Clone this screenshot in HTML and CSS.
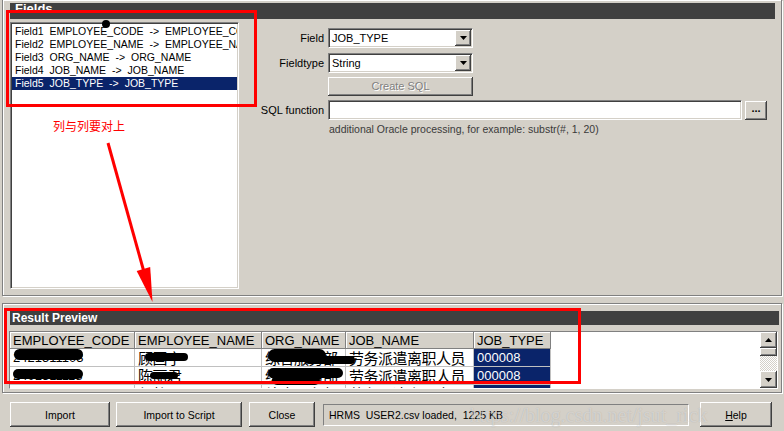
FILE: index.html
```html
<!DOCTYPE html>
<html>
<head>
    <title>CSV Import</title>
    <link rel="stylesheet" href="styles.css">
</head>
<body>
    <div class="panel fields-panel">
        <div class="caption"><span>Fields</span></div>
        <div class="fields-body">
            <div class="listbox">
                <div class="item">Field1 EMPLOYEE_CODE -&gt; EMPLOYEE_CODE</div>
                <div class="item">Field2 EMPLOYEE_NAME -&gt; EMPLOYEE_NAME</div>
                <div class="item">Field3 ORG_NAME -&gt; ORG_NAME</div>
                <div class="item">Field4 JOB_NAME -&gt; JOB_NAME</div>
                <div class="item selected">Field5 JOB_TYPE -&gt; JOB_TYPE</div>
            </div>
            <div class="form">
                <div class="row row-field">
                    <label>Field</label>
                    <div class="combo">
                        <span class="value">JOB_TYPE</span>
                        <span class="drop"><svg width="7" height="4" viewBox="0 0 7 4"><path d="M0 0h7L3.5 4z"/></svg></span>
                    </div>
                </div>
                <div class="row row-type">
                    <label>Fieldtype</label>
                    <div class="combo">
                        <span class="value">String</span>
                        <span class="drop"><svg width="7" height="4" viewBox="0 0 7 4"><path d="M0 0h7L3.5 4z"/></svg></span>
                    </div>
                </div>
                <div class="row row-create">
                    <label></label>
                    <div class="btn-disabled">Create SQL</div>
                </div>
                <div class="row row-sql">
                    <label>SQL function</label>
                    <div class="sql-input"></div>
                    <div class="dots">...</div>
                </div>
                <div class="hint">additional Oracle processing, for example: substr(#, 1, 20)</div>
            </div>
        </div>
    </div>

    <div class="panel preview-panel">
        <div class="caption"><span>Result Preview</span></div>
        <div class="grid">
            <div class="table-area">
                <table>
                    <colgroup>
                        <col class="c1"><col class="c2"><col class="c3"><col class="c4"><col class="c5">
                    </colgroup>
                    <tr>
                        <th>EMPLOYEE_CODE</th><th>EMPLOYEE_NAME</th><th>ORG_NAME</th><th>JOB_NAME</th><th>JOB_TYPE</th>
                    </tr>
                    <tr>
                        <td>2421511103</td><td class="cjk">顾国宇</td><td class="cjk">综合服务部</td><td class="cjk">劳务派遣离职人员</td><td class="sel">000008</td>
                    </tr>
                    <tr>
                        <td>2401311118</td><td class="cjk">陈丽君</td><td class="cjk">综合服务部</td><td class="cjk">劳务派遣离职人员</td><td class="sel">000008</td>
                    </tr>
                    <tr>
                        <td>2401311120</td><td class="cjk">何静</td><td class="cjk">综合服务部</td><td class="cjk">劳务派遣离职人员</td><td class="sel">000008</td>
                    </tr>
                </table>
                <!-- redactions -->
                <span class="blob b1"></span>
                <span class="blob b2"></span>
                <span class="blob b3"></span>
                <span class="blob b4"></span>
                <span class="blob b5"></span>
                <span class="blob b6"></span>
                <span class="blob b7"></span>
                <span class="blob b8"></span>
            </div>
            <div class="vscroll">
                <div class="sb-btn sb-up"><svg width="7" height="4" viewBox="0 0 7 4"><path d="M0 4h7L3.5 0z"/></svg></div>
                <div class="sb-thumb"></div>
                <div class="sb-track"></div>
                <div class="sb-btn sb-down"><svg width="7" height="4" viewBox="0 0 7 4"><path d="M0 0h7L3.5 4z"/></svg></div>
            </div>
        </div>
    </div>

    <div class="buttons">
        <div class="btn b-import">Import</div>
        <div class="btn b-script">Import to Script</div>
        <div class="btn b-close">Close</div>
        <div class="status">HRMS&nbsp; USER2.csv loaded,&nbsp; 1225 KB</div>
        <div class="btn b-help"><u>H</u>elp</div>
    </div>

    <!-- annotations drawn over the screenshot -->
    <div class="mark mark-fields"></div>
    <div class="mark mark-preview"></div>
    <div class="dot"></div>
    <div class="note">列与列要对上</div>
    <svg class="arrow" width="784" height="431" viewBox="0 0 784 431">
        <line x1="108" y1="143" x2="144" y2="272" stroke="#f00" stroke-width="3"/>
        <polygon points="136.7,271 150.2,267 152.5,302" fill="#f00"/>
    </svg>
    <div class="watermark">https://blog.csdn.net/jsut_rick</div>
</body>
</html>
```

FILE: styles.css
```css
* {
    box-sizing: border-box;
}

body {
    position: relative;
    width: 784px;
    height: 431px;
    margin: 0;
    overflow: hidden;
    background: #d4d0c8;
    font-family: "Liberation Sans", Arial, sans-serif;
    font-size: 11px;
    color: #000;
}

/* etched group frames */
.panel {
    margin-left: 2px;
    width: 780px;
    border: 1px solid #808080;
    box-shadow: inset 1px 1px #fff, 1px 1px #fff;
}

.fields-panel {
    height: 296px;
    border-top: none;
    padding: 3px 6px 0 7px;
}

.preview-panel {
    height: 90px;
    margin-top: 7px;
    padding: 7px 2px 3px 7px;
}

.caption {
    height: 16px;
    padding-left: 5px;
    overflow: hidden;
    background: #404040;
    color: #fff;
    font-size: 12px;
    font-weight: bold;
    line-height: 16px;
}

.fields-panel .caption span {
    display: block;
    margin-top: -2px;
    font-size: 13px;
}

.preview-panel .caption {
    height: 14px;
    padding-left: 2px;
    line-height: 14px;
}

.fields-body {
    display: flex;
    margin-top: 3px;
}

.listbox {
    width: 229px;
    height: 267px;
    padding: 2px 1px;
    background: #fff;
    border: 1px solid;
    border-color: #808080 #fff #fff #808080;
    box-shadow: inset 1px 1px #404040, inset -1px -1px #d4d0c8;
    font-size: 10.5px;
}

.item {
    height: 13px;
    padding-left: 3px;
    line-height: 13px;
    white-space: nowrap;
    overflow: hidden;
    word-spacing: 3px;
}

.item.selected {
    background: #0a246a;
    color: #fff;
}

.form {
    flex: 1;
    padding-top: 6px;
}

.row {
    display: flex;
    align-items: center;
}

.row label {
    width: 85px;
    margin-right: 4px;
    text-align: right;
}

.row-field { margin-bottom: 5px; }
.row-type { margin-bottom: 4px; }
.row-create { margin-bottom: 4px; }

.combo {
    display: flex;
    align-items: center;
    width: 145px;
    height: 20px;
    padding: 1px;
    background: #fff;
    border: 1px solid;
    border-color: #808080 #fff #fff #808080;
    box-shadow: inset 1px 1px #404040, inset -1px -1px #d4d0c8;
}

.combo .value {
    flex: 1;
    padding-left: 2px;
}

.drop,
.sb-btn {
    display: flex;
    align-items: center;
    justify-content: center;
    width: 16px;
    height: 16px;
    background: #d4d0c8;
    box-shadow: inset -1px -1px #404040, inset 1px 1px #fff, inset -2px -2px #808080;
}

.btn-disabled {
    width: 145px;
    height: 19px;
    line-height: 19px;
    text-align: center;
    background: #d4d0c8;
    box-shadow: inset -1px -1px #404040, inset 1px 1px #fff, inset -2px -2px #808080;
    color: #808080;
    text-shadow: 1px 1px #fff;
}

.sql-input {
    width: 414px;
    height: 20px;
    background: #fff;
    border: 1px solid;
    border-color: #808080 #fff #fff #808080;
    box-shadow: inset 1px 1px #404040, inset -1px -1px #d4d0c8;
}

.dots {
    width: 22px;
    height: 19px;
    margin-left: 3px;
    line-height: 14px;
    text-align: center;
    font-weight: bold;
    background: #d4d0c8;
    box-shadow: inset -1px -1px #404040, inset 1px 1px #fff, inset -2px -2px #808080;
}

.hint {
    margin-top: 3px;
    padding-left: 90px;
    font-size: 10.5px;
    color: #3a3a3a;
}

/* result grid */
.grid {
    display: flex;
    height: 58px;
    margin: 6px 1px 0 -1px;
    background: #fff;
    border: 1px solid;
    border-color: #808080 #fff #fff #808080;
}

.table-area {
    position: relative;
    flex: 1;
    overflow: hidden;
}

table {
    width: 541px;
    table-layout: fixed;
    border-collapse: separate;
    border-spacing: 0;
    font-size: 13px;
}

.c1 { width: 125px; }
.c2 { width: 127px; }
.c3 { width: 84px; }
.c4 { width: 128px; }
.c5 { width: 77px; }

th {
    height: 17px;
    padding: 0 3px;
    background: #d4d0c8;
    font-weight: normal;
    text-align: left;
    white-space: nowrap;
    overflow: hidden;
    box-shadow: inset -1px -1px #808080, inset 1px 1px #fff;
}

td {
    height: 18px;
    padding: 0 3px;
    line-height: 16px;
    border-right: 1px solid #c0c0c0;
    border-bottom: 1px solid #c0c0c0;
    white-space: nowrap;
    overflow: hidden;
}

td.cjk {
    font-family: "Noto Sans CJK SC", sans-serif;
    font-size: 15px;
    letter-spacing: -0.5px;
}

td.sel {
    background: #0a246a;
    color: #fff;
}

.blob {
    position: absolute;
    background: #000;
    border-radius: 7px;
    filter: blur(0.6px);
}

.b1 { left: 4px; top: 17px; width: 69px; height: 11px; }
.b2 { left: 135px; top: 21px; width: 43px; height: 8px; }
.b3 { left: 258px; top: 17px; width: 58px; height: 13px; }
.b4 { left: 295px; top: 24px; width: 50px; height: 8px; }
.b5 { left: 3px; top: 37px; width: 70px; height: 10px; }
.b6 { left: 140px; top: 40px; width: 28px; height: 7px; }
.b7 { left: 258px; top: 36px; width: 75px; height: 10px; }
.b8 { left: 262px; top: 43px; width: 48px; height: 10px; }

.vscroll {
    display: flex;
    flex-direction: column;
    width: 17px;
}

.sb-btn {
    width: 17px;
}

.sb-down {
    height: 17px;
}

.sb-thumb {
    height: 8px;
    background: #d4d0c8;
    box-shadow: inset -1px -1px #404040, inset 1px 1px #fff, inset -2px -2px #808080;
}

.sb-track {
    height: 15px;
    background: repeating-conic-gradient(#fff 0 25%, #d4d0c8 0 50%) 0 0 / 2px 2px;
}

/* bottom button bar */
.buttons {
    display: flex;
    align-items: center;
    height: 25px;
    margin-top: 9px;
    padding-left: 10px;
}

.btn {
    display: flex;
    align-items: center;
    justify-content: center;
    height: 25px;
    font-size: 10.5px;
    background: #d4d0c8;
    box-shadow: inset -1px -1px #404040, inset 1px 1px #fff, inset -2px -2px #808080;
}

.b-import { width: 100px; }
.b-script { width: 126px; margin-left: 6px; }
.b-close { width: 66px; margin-left: 7px; }
.b-help { width: 72px; margin-left: 11px; }

.status {
    width: 366px;
    height: 22px;
    margin-left: 8px;
    padding-left: 5px;
    line-height: 20px;
    font-size: 10.5px;
    border: 1px solid;
    border-color: #808080 #fff #fff #808080;
}

/* annotations */
.mark {
    position: absolute;
    border: 3px solid #f00;
}

.mark-fields {
    left: 6px;
    top: 10px;
    width: 251px;
    height: 97px;
}

.mark-preview {
    left: 4px;
    top: 308px;
    width: 577px;
    height: 76px;
}

.dot {
    position: absolute;
    left: 102px;
    top: 20px;
    width: 8px;
    height: 8px;
    border-radius: 50%;
    background: #000;
}

.note {
    position: absolute;
    left: 53px;
    top: 119px;
    font-family: "Noto Sans CJK SC", sans-serif;
    font-size: 12px;
    line-height: 14px;
    color: #f00;
}

.arrow {
    position: absolute;
    left: 0;
    top: 0;
    pointer-events: none;
}

.watermark {
    position: absolute;
    left: 470px;
    top: 404px;
    font-family: "Liberation Serif", serif;
    font-size: 20px;
    color: rgba(255, 255, 255, 0.45);
    text-shadow: 0 0 1px rgba(0, 0, 0, 0.2);
    white-space: nowrap;
    pointer-events: none;
}
```
